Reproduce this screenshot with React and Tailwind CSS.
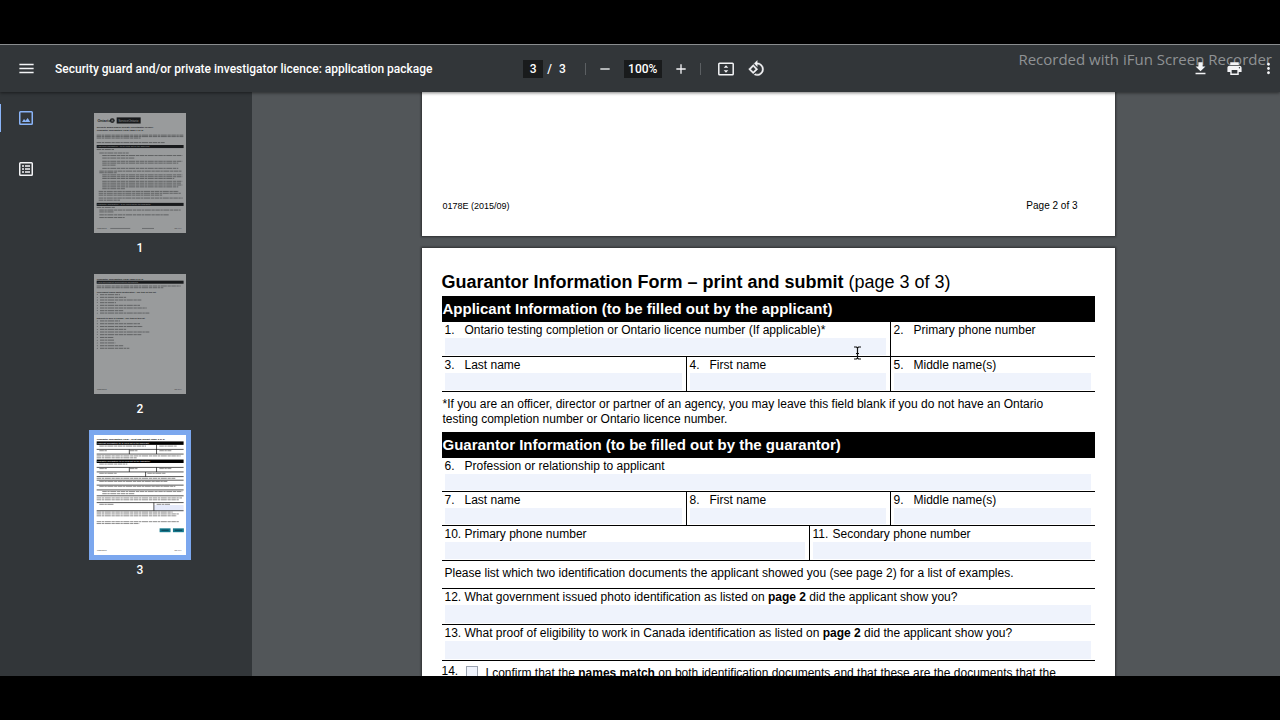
import { useState } from "react";
import {
  MdAdd,
  MdDownload,
  MdMenu,
  MdMoreVert,
  MdPrint,
  MdRemove,
} from "react-icons/md";

const PAGE_ONE_LINES = [
  [20, 166, 650],
  [20, 177, 650],
  [20, 188, 330],
  [20, 222, 510],
  [20, 274, 130],
  [40, 300, 220],
  [62, 319, 600],
  [62, 338, 240],
  [62, 362, 600],
  [62, 376, 570],
  [62, 391, 100],
  [62, 415, 570],
  [40, 436, 620],
  [40, 448, 130],
  [62, 464, 600],
  [62, 478, 600],
  [62, 491, 540],
  [62, 512, 600],
  [62, 526, 590],
  [62, 540, 600],
  [62, 554, 570],
  [62, 568, 170],
  [35, 588, 600],
  [35, 602, 620],
  [35, 616, 480],
  [35, 638, 630],
  [35, 654, 160],
  [20, 708, 140],
  [40, 728, 610],
  [40, 742, 110],
  [40, 764, 520],
  [40, 784, 190],
];

const PAGE_TWO_LINES = [
  [20, 90, 630],
  [20, 103, 500],
  [45, 155, 150],
  [45, 175, 200],
  [45, 195, 310],
  [45, 215, 120],
  [45, 235, 300],
  [45, 255, 350],
  [45, 275, 175],
  [45, 293, 370],
  [45, 352, 150],
  [45, 373, 300],
  [45, 394, 320],
  [45, 415, 200],
  [45, 435, 370],
  [45, 455, 310],
  [45, 476, 100],
  [45, 496, 105],
  [45, 517, 115],
  [45, 538, 175],
  [45, 557, 220],
];

const PAGE_THREE_LINES = [
  [40, 83, 350],
  [490, 83, 130],
  [40, 118, 60],
  [270, 118, 60],
  [490, 118, 90],
  [20, 157, 630],
  [20, 171, 300],
  [40, 218, 210],
  [40, 252, 60],
  [270, 252, 60],
  [490, 252, 90],
  [40, 287, 130],
  [400, 287, 140],
  [20, 325, 590],
  [40, 348, 510],
  [40, 385, 570],
  [62, 424, 600],
  [62, 440, 240],
  [20, 472, 640],
  [20, 486, 620],
  [40, 520, 110],
  [470, 520, 100],
  [20, 578, 570],
  [20, 592, 620],
  [20, 606, 600],
  [20, 650, 620],
  [20, 664, 320],
];

function WordLines({ lines }) {
  return lines.map(([x, y, width]) => (
    <path
      key={`${x}-${y}`}
      d={`M${x} ${y}h${width}`}
      stroke="#555"
      strokeWidth="5"
      strokeDasharray="34 4 18 4 46 5 25 4"
    />
  ));
}

function ThumbFooter({ page }) {
  return (
    <g fontSize="10" fill="#222">
      <text x="22" y="869">0178E (2015/09)</text>
      <text x="603" y="869">Page {page} of 3</text>
    </g>
  );
}

function ThumbOne() {
  return (
    <svg viewBox="0 0 690 900" className="block h-full w-full bg-white font-['Liberation_Sans',sans-serif]" aria-hidden="true">
      <text x="26" y="66" fontSize="28" fontWeight="700">Ontario</text>
      <circle cx="137" cy="57" r="18" />
      <path d="M137 44v26M126 63l22-12M126 51l22 12" stroke="#ddd" strokeWidth="3" />
      <rect x="170" y="33" width="180" height="46" />
      <text x="182" y="64" fontSize="23" fill="#ddd">ServiceOntario</text>
      <g fontSize="18" fontWeight="700">
        <text x="20" y="116">Security guard and/or private investigator licence:</text>
        <text x="20" y="136">Guarantor Information Form (page 1 of 3)</text>
      </g>
      <rect x="20" y="240" width="652" height="23" />
      <rect x="20" y="674" width="652" height="23" />
      <g fontSize="15" fontWeight="700" fill="#bbb">
        <text x="24" y="257">Applicant Information – to be filled out by the applicant</text>
        <text x="24" y="691">Guarantor Information – to be filled out by the guarantor</text>
      </g>
      <WordLines lines={PAGE_ONE_LINES} />
      <ThumbFooter page={1} />
      <path d="M122 866h150M360 866h90" stroke="#777" strokeWidth="5" />
    </svg>
  );
}

function ThumbTwo() {
  return (
    <svg viewBox="0 0 690 900" className="block h-full w-full bg-white font-['Liberation_Sans',sans-serif]" aria-hidden="true">
      <text x="20" y="43" fontSize="18" fontWeight="700">Guarantor Information Form (page 2 of 3)</text>
      <rect x="20" y="50" width="652" height="23" />
      <text x="24" y="67" fontSize="15" fontWeight="700" fill="#bbb">Valid government identification documents</text>
      <g fontSize="15" fontWeight="700">
        <text x="20" y="139">Government issued photo identification – one item off this list:</text>
        <text x="20" y="337">Eligibility to work in Canada – one item off this list:</text>
      </g>
      <WordLines lines={PAGE_TWO_LINES} />
      {PAGE_TWO_LINES.slice(2).map(([, y]) => (
        <circle key={y} cx="24" cy={y} r="3" />
      ))}
      <ThumbFooter page={2} />
    </svg>
  );
}

function ThumbThree() {
  return (
    <svg viewBox="0 0 690 900" className="block h-full w-full bg-white font-['Liberation_Sans',sans-serif]" aria-hidden="true">
      <text x="20" y="40" fontSize="18" fontWeight="700">Guarantor Information Form – print and submit (page 3 of 3)</text>
      <rect x="20" y="48" width="652" height="26" />
      <rect x="20" y="184" width="652" height="26" />
      <g fontSize="15" fontWeight="700" fill="#ddd">
        <text x="23" y="66">Applicant Information (to be filled out by the applicant)</text>
        <text x="23" y="202">Guarantor Information (to be filled out by the guarantor)</text>
      </g>
      <rect x="450" y="525" width="222" height="42" fill="#e5eafa" />
      <path
        d="M20 108h652M20 143h652M20 243h652M20 277h652M20 312h652M20 339h652M20 376h652M20 412h652M20 456h652M20 507h652M20 568h652M469 74v69M265 108v35M265 243v34M469 243v34M387 277v35M449 507v61"
        stroke="#000"
        strokeWidth="5"
        fill="none"
      />
      <WordLines lines={PAGE_THREE_LINES} />
      <rect x="492" y="700" width="82" height="29" fill="#15788c" />
      <rect x="592" y="700" width="82" height="29" fill="#15788c" />
      <path d="M506 714h54M606 714h54" stroke="#0b3f50" strokeWidth="8" />
      <ThumbFooter page={3} />
    </svg>
  );
}

const THUMBS = [
  { page: 1, Preview: ThumbOne },
  { page: 2, Preview: ThumbTwo },
  { page: 3, Preview: ThumbThree },
];

function ToolButton({ label, children }) {
  return (
    <button type="button" aria-label={label} className="flex h-6 w-6 shrink-0 items-center justify-center text-gray-100">
      {children}
    </button>
  );
}

function FitIcon() {
  return (
    <svg viewBox="0 0 16 14" className="h-[14px] w-4" fill="none" aria-hidden="true">
      <rect x="0.8" y="1.3" width="14.4" height="11.4" rx="0.8" stroke="currentColor" strokeWidth="1.5" />
      <path d="M8 3.2 10.3 5.8H5.7ZM8 10.8 5.7 8.2h4.6Z" fill="currentColor" />
    </svg>
  );
}

function RotateIcon() {
  return (
    <svg viewBox="0 0 24 24" className="h-[17px] w-[17px]" fill="currentColor" aria-hidden="true">
      <path d="M7.34 6.41.86 12.9l6.49 6.48 6.49-6.48-6.5-6.49zM3.69 12.9l3.66-3.66L11 12.9l-3.66 3.66-3.65-3.66zm15.67-6.26A8.95 8.95 0 0 0 13 4V.76L8.76 5 13 9.24V6c1.79 0 3.58.68 4.95 2.05a7.007 7.007 0 0 1 0 9.9 6.973 6.973 0 0 1-7.79 1.44l-1.49 1.49C10.02 21.62 11.51 22 13 22c2.3 0 4.61-.88 6.36-2.64a8.98 8.98 0 0 0 0-12.72z" stroke="currentColor" strokeWidth="0.6" />
    </svg>
  );
}

function Toolbar() {
  return (
    <header className="relative z-10 flex h-12 shrink-0 items-center border-t border-[#8a8d8f] bg-[#323639] font-[Roboto,sans-serif] text-[12px] font-medium text-white shadow-[0_1px_3px_rgba(0,0,0,0.5)]">
      <div className="pointer-events-none absolute top-1 right-2 font-['Open_Sans',sans-serif] text-[15px] leading-5 font-normal text-[#8f9294]">
        Recorded with iFun Screen Recorder
      </div>

      <div className="flex min-w-0 flex-1 items-center gap-[17px] pl-[14px]">
        <ToolButton label="Menu">
          <MdMenu size={19} />
        </ToolButton>
        <h1 className="truncate font-medium">
          Security guard and/or private investigator licence: application package
        </h1>
      </div>

      <div className="flex shrink-0 items-center pr-[2px]">
        <input
          aria-label="Page number"
          defaultValue="3"
          className="h-[18px] w-5 bg-[#191b1c] text-center text-[12px] font-medium"
        />
        <span className="pl-1">/</span>
        <span className="pl-[7px]">3</span>
        <span className="mr-[7px] ml-[19px] h-3 w-px bg-[#5b5f62]" />
        <ToolButton label="Zoom out">
          <MdRemove size={16} />
        </ToolButton>
        <input
          aria-label="Zoom level"
          defaultValue="100%"
          className="mx-[7px] h-[18px] w-[38px] bg-[#191b1c] text-center text-[12px] font-medium"
        />
        <ToolButton label="Zoom in">
          <MdAdd size={16} />
        </ToolButton>
        <span className="mr-[13px] ml-[7px] h-3 w-px bg-[#5b5f62]" />
        <ToolButton label="Fit to page">
          <FitIcon />
        </ToolButton>
        <span className="w-[7px]" />
        <ToolButton label="Rotate counterclockwise">
          <RotateIcon />
        </ToolButton>
      </div>

      <div className="relative flex flex-1 items-center justify-end gap-[10px]">
        <ToolButton label="Download">
          <MdDownload size={17} />
        </ToolButton>
        <ToolButton label="Print">
          <MdPrint size={17} />
        </ToolButton>
        <ToolButton label="More actions">
          <MdMoreVert size={17} />
        </ToolButton>
      </div>
    </header>
  );
}

function Sidebar({ current, onSelect }) {
  return (
    <aside className="flex w-[252px] shrink-0 bg-[#323639]">
      <div className="flex w-[52px] flex-col gap-[23px] pt-3">
        <button type="button" aria-label="Thumbnails" className="flex h-7 items-center justify-center border-l border-[#8ab4f8] pr-px text-[#8ab4f8]">
          <svg viewBox="0 0 14 14" className="h-[14px] w-[14px]" fill="none" aria-hidden="true">
            <rect x="0.75" y="0.75" width="12.5" height="12.5" rx="0.8" stroke="currentColor" strokeWidth="1.5" />
            <path d="m3 11 2-3 1.5 1.7L8.7 7l2.5 4Z" fill="currentColor" />
          </svg>
        </button>
        <button type="button" aria-label="Document outline" className="flex h-7 items-center justify-center text-gray-100">
          <svg viewBox="0 0 14 14" className="h-[14px] w-[14px]" fill="none" aria-hidden="true">
            <rect x="0.75" y="0.75" width="12.5" height="12.5" rx="0.8" stroke="currentColor" strokeWidth="1.5" />
            <path d="M3 4h2M6 4h5M3 7h2M6 7h5M3 10h2M6 10h5" stroke="currentColor" strokeWidth="1.6" />
          </svg>
        </button>
      </div>

      <div className="flex w-44 flex-col items-center gap-3 pt-4">
        {THUMBS.map(({ page, Preview }) => (
          <button
            key={page}
            type="button"
            onClick={() => onSelect(page)}
            className="flex flex-col items-center gap-[2px] font-[Roboto,sans-serif] text-[12px] leading-[17px] font-medium text-white"
          >
            <span className={`h-[130px] w-[102px] p-[5px] ${page === current ? "bg-[#7ba7ee]" : ""}`}>
              <span className={`block h-full ${page === current ? "" : "opacity-50"}`}>
                <Preview />
              </span>
            </span>
            {page}
          </button>
        ))}
      </div>
    </aside>
  );
}

function Field({ number, label, size = "h-[35px]", divider = false, blank = false, children }) {
  return (
    <div className={`relative flex flex-col border-b border-black pr-1 pb-px pl-[3px] ${size} ${divider ? "border-l" : ""}`}>
      <label htmlFor={`field-${number}`} className="flex h-4 shrink-0 items-center whitespace-nowrap">
        <span className="w-5 shrink-0">{number}.</span>
        <span>{label}</span>
      </label>
      <input
        id={`field-${number}`}
        type="text"
        className={`min-h-0 w-full flex-1 px-1 outline-none ${blank ? "bg-white" : "bg-[#eff3fc]"}`}
      />
      {children}
    </div>
  );
}

function SectionBar({ children }) {
  return (
    <h3 className="flex h-[26px] items-center bg-black px-px text-[15px] font-bold text-white">
      {children}
    </h3>
  );
}

function TextCursor() {
  return (
    <svg viewBox="0 0 9 14" className="absolute right-7 -bottom-1 z-10 h-[14px] w-[9px]" fill="none" aria-hidden="true">
      <path d="M1 1h2.5l1 1 1-1H8M4.5 2v10M1 13h2.5l1-1 1 1H8M3 7.5h3" stroke="#111" strokeWidth="1.2" />
    </svg>
  );
}

function FormPage() {
  return (
    <article className="w-[693px] shrink-0 bg-white px-5 pt-[21px] pb-10 shadow-[0_0_2px_1px_rgba(0,0,0,0.45)]">
      <h2 className="h-[27px] text-[18px] leading-[26px] font-bold">
        Guarantor Information Form – print and submit <span className="font-normal">(page 3 of 3)</span>
      </h2>

      <SectionBar>Applicant Information (to be filled out by the applicant)</SectionBar>
      <div className="grid grid-cols-[448fr_205fr]">
        <Field number={1} label="Ontario testing completion or Ontario licence number (If applicable)*">
          <TextCursor />
        </Field>
        <Field number={2} label="Primary phone number" divider blank />
      </div>
      <div className="grid grid-cols-[244fr_204fr_205fr]">
        <Field number={3} label="Last name" />
        <Field number={4} label="First name" divider />
        <Field number={5} label="Middle name(s)" divider />
      </div>

      <p className="h-10 px-px pt-[5px] leading-[15px]">
        *If you are an officer, director or partner of an agency, you may leave this field blank if you do not have an Ontario
        <br />
        testing completion number or Ontario licence number.
      </p>

      <SectionBar>Guarantor Information (to be filled out by the guarantor)</SectionBar>
      <Field number={6} label="Profession or relationship to applicant" size="h-[34px]" />
      <div className="grid grid-cols-[244fr_204fr_205fr]">
        <Field number={7} label="Last name" size="h-[34px]" />
        <Field number={8} label="First name" size="h-[34px]" divider />
        <Field number={9} label="Middle name(s)" size="h-[34px]" divider />
      </div>
      <div className="grid grid-cols-[367fr_286fr]">
        <Field number={10} label="Primary phone number" />
        <Field number={11} label="Secondary phone number" divider />
      </div>
      <p className="h-7 border-b border-black px-[3px] leading-6">
        Please list which two identification documents the applicant showed you (see page 2) for a list of examples.
      </p>
      <Field
        number={12}
        size="h-9"
        label={<>What government issued photo identification as listed on <b>page 2</b> did the applicant show you?</>}
      />
      <Field
        number={13}
        size="h-9"
        label={<>What proof of eligibility to work in Canada identification as listed on <b>page 2</b> did the applicant show you?</>}
      />
      <div className="flex items-start pt-[2px] leading-4">
        <span className="w-6 shrink-0">14.</span>
        <input
          id="field-14"
          type="checkbox"
          className="mt-[3px] mr-2 h-3 w-3 shrink-0 appearance-none border border-gray-400 bg-[#eff3fc]"
        />
        <label htmlFor="field-14" className="pt-[2px] whitespace-nowrap">
          I confirm that the <b>names match</b> on both identification documents and that these are the documents that the
        </label>
      </div>
    </article>
  );
}

export default function App() {
  const [current, setCurrent] = useState(3);

  return (
    <div className="flex h-screen flex-col overflow-hidden bg-black py-11">
      <Toolbar />
      <div className="flex min-h-0 flex-1">
        <Sidebar current={current} onSelect={setCurrent} />
        <main className="flex min-w-0 flex-1 flex-col items-center gap-3 overflow-hidden bg-[#525659] pl-1 font-['Liberation_Sans',sans-serif] text-[12px] text-black">
          <article className="flex h-36 w-[693px] shrink-0 items-end justify-between bg-white pr-[37px] pb-[22px] pl-[21px] shadow-[0_0_2px_1px_rgba(0,0,0,0.45)]">
            <span className="text-[9px] leading-4">0178E (2015/09)</span>
            <span className="text-[10px] leading-4">Page 2 of 3</span>
          </article>
          <FormPage />
        </main>
      </div>
    </div>
  );
}
